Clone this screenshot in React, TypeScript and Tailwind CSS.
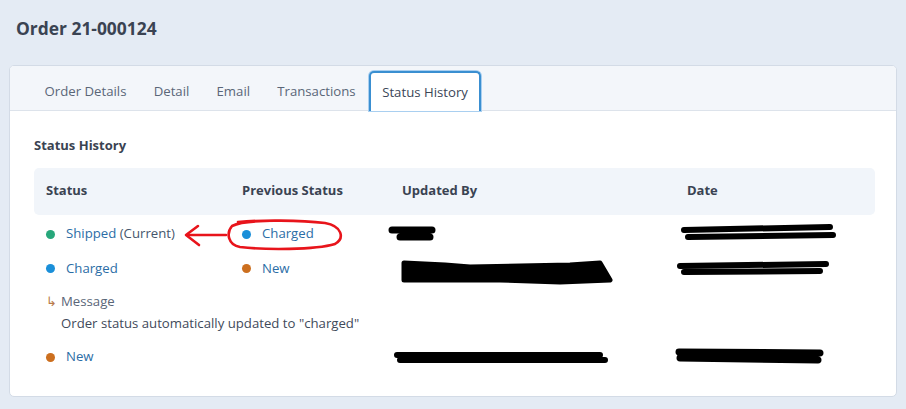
import React from "react";

const tabs = ["Order Details", "Detail", "Email", "Transactions", "Status History"];

function Dot({ color }: { color: string }) {
  return <span className={`inline-block h-[9px] w-[9px] rounded-full ${color}`} />;
}

// black marker scribbles + red pen marks drawn on top of the screenshot
function Annotations() {
  return (
    <svg
      className="pointer-events-none absolute left-0 top-0"
      width={906}
      height={409}
      viewBox="0 0 906 409"
    >
      <g stroke="#000" strokeLinecap="round" strokeLinejoin="round" fill="none">
        {/* updated by */}
        <path d="M392 230 L432 230 M400 237 L430 237" strokeWidth={7} />
        <path d="M404 263 L445 265 L470 267 L570 265 L600 263 L610 280 L560 282 L500 280 L404 280 Z" strokeWidth={5} fill="#000" />
        <path d="M397 355 L600 355 M400 360 L605 360" strokeWidth={6} />
        {/* date */}
        <path d="M684 230 L830 227 M688 237 L833 235" strokeWidth={6} />
        <path d="M680 266 L826 264 M684 272 L820 271" strokeWidth={6} />
        <path d="M679 352 L820 353 M680 358 L818 360" strokeWidth={7} />
      </g>
      <g stroke="#e8141b" strokeWidth={2.6} fill="none" strokeLinecap="round" strokeLinejoin="round">
        <path d="M188 235 L226 235" />
        <path d="M198 226 L186 235 L199 245" />
        <path d="M238 222 C260 220 300 220 325 223 C342 226 345 238 335 244 C315 250 265 250 240 247 C228 245 226 233 232 226 C240 222 260 221 270 221" />
      </g>
    </svg>
  );
}

export default function App() {
  return (
    <div
      className="relative h-[409px] w-[906px] overflow-hidden bg-[#e4ebf4] text-[13.2px] text-[#4a5565]"
      style={{ fontFamily: '"Open Sans", "Noto Sans", sans-serif' }}
    >
      <h1 className="px-4 pt-[15px] text-[17.4px] font-bold text-[#3a4352]">Order 21-000124</h1>

      <div className="ml-[9px] mt-[24px] w-[888px] overflow-hidden rounded-[5px] border border-[#d3dbe6] bg-white">
        <div className="flex h-[45px] items-end border-b border-[#dde3eb] bg-[#f3f6fa] pl-[21px]">
          {tabs.map((t) => {
            const active = t === "Status History";
            return active ? (
              <div
                key={t}
                className="-mb-px flex h-[40px] items-center rounded-t-[5px] border-2 border-b-0 border-[#3a8fd1] bg-white px-[11px] pt-[2px] text-[#3b4657] shadow-[0_0_0_1px_#a9cff0]"
              >
                {t}
              </div>
            ) : (
              <div key={t} className="flex h-[40px] items-center px-[13.6px] pt-[3px] text-[#5a6678]">
                {t}
              </div>
            );
          })}
        </div>

        <div className="px-6 pb-[21px] pt-[25px]">
          <h2 className="text-[13px] font-bold text-[#3a4352]">Status History</h2>

          <table className="mt-[12px] w-[841px] table-fixed border-collapse">
            <colgroup>
              <col className="w-[196px]" />
              <col className="w-[160px]" />
              <col className="w-[285px]" />
              <col />
            </colgroup>
            <thead>
              <tr className="h-[47px] bg-[#f1f5fa] text-left text-[13px] font-bold text-[#3a4352]">
                <th className="rounded-l-[5px] pl-3 font-bold">Status</th>
                <th className="pl-[12px] font-bold">Previous Status</th>
                <th className="pl-[12px] font-bold">Updated By</th>
                <th className="rounded-r-[5px] pl-[12px] font-bold">Date</th>
              </tr>
            </thead>
            <tbody>
              <tr className="h-[37px] align-middle">
                <td className="pl-3 pt-[2px]">
                  <span className="flex items-center gap-[11px]">
                    <Dot color="bg-[#27a77b]" />
                    <span>
                      <span className="text-[#2b6da6]">Shipped</span>{" "}
                      <span className="text-[#45566c]">(Current)</span>
                    </span>
                  </span>
                </td>
                <td className="pl-[12px] pt-[2px]">
                  <span className="flex items-center gap-[11px]">
                    <Dot color="bg-[#1a8fd9]" />
                    <span className="text-[#2b6da6]">Charged</span>
                  </span>
                </td>
                <td />
                <td />
              </tr>
              <tr className="h-[34px] align-middle">
                <td className="pl-3">
                  <span className="flex items-center gap-[11px]">
                    <Dot color="bg-[#1a8fd9]" />
                    <span className="text-[#2b6da6]">Charged</span>
                  </span>
                </td>
                <td className="pl-[12px]">
                  <span className="flex items-center gap-[11px]">
                    <Dot color="bg-[#cc6f1f]" />
                    <span className="text-[#2b6da6]">New</span>
                  </span>
                </td>
                <td />
                <td />
              </tr>
              <tr>
                <td colSpan={4} className="pl-3 pt-[4px] pb-[6px]">
                  <div className="flex">
                    <span className="w-[15px] pt-[5px] text-[13px] leading-none text-[#b87a4a]">↳</span>
                    <div className="leading-[22px]">
                      <div className="text-[#5a6678]">Message</div>
                      <div className="text-[#3f4a5a]">Order status automatically updated to "charged"</div>
                    </div>
                  </div>
                </td>
              </tr>
              <tr className="h-[35px] align-middle">
                <td className="pl-3">
                  <span className="flex items-center gap-[11px]">
                    <Dot color="bg-[#cc6f1f]" />
                    <span className="text-[#2b6da6]">New</span>
                  </span>
                </td>
                <td />
                <td />
                <td />
              </tr>
            </tbody>
          </table>
        </div>
      </div>

      <Annotations />
    </div>
  );
}
